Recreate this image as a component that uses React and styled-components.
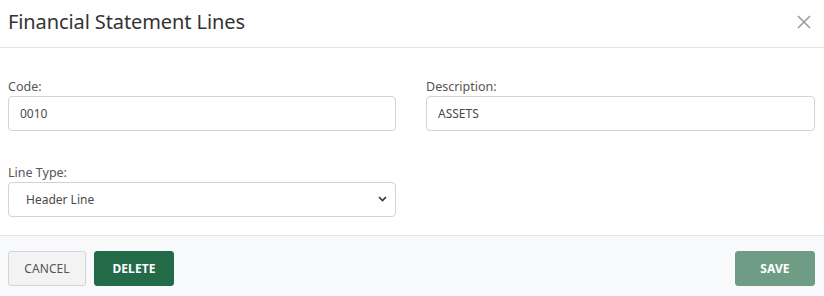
import React from "react";
import styled, { createGlobalStyle } from "styled-components";

const Global = createGlobalStyle`
  html, body { margin: 0; padding: 0; background: #fff; }
  body { font-family: "Segoe UI", "Noto Sans", "Open Sans", sans-serif; color: #333; }
  * { box-sizing: border-box; }
`;

const Modal = styled.div`
  width: 824px;
  height: 296px;
  display: flex;
  flex-direction: column;
  background: #fff;
  overflow: hidden;
`;

const Header = styled.div`
  height: 48px;
  display: flex;
  align-items: center;
  justify-content: space-between;
  padding: 0 12px 0 8px;
  border-bottom: 1px solid #e2e2e2;
`;

const Title = styled.h4`
  margin: 0;
  font-size: 20px;
  font-weight: 400;
  color: #333;
  letter-spacing: -0.1px;
  line-height: 1;
  padding-bottom: 4px;
`;

const CloseBtn = styled.button`
  border: 0;
  background: none;
  padding: 0;
  width: 16px;
  height: 16px;
  display: flex;
  align-items: center;
  justify-content: center;
  margin-bottom: 4px;
  cursor: pointer;
`;

const Body = styled.div`
  flex: 1;
  padding: 30px 9px 0 8px;
  display: grid;
  grid-template-columns: 388px 389px;
  column-gap: 30px;
  row-gap: 33px;
  align-content: start;
`;

const Field = styled.div`
  display: flex;
  flex-direction: column;
`;

const Label = styled.label`
  font-size: 12.5px;
  line-height: 18px;
  color: #555;
`;

const inputBase = `
  height: 35px;
  border: 1px solid #cfd4da;
  border-radius: 4px;
  background: #fff;
  font-family: inherit;
  font-size: 12px;
  color: #4a4a4a;
  outline: none;
`;

const Input = styled.input`
  ${inputBase}
  padding: 0 11px;
`;

const SelectWrap = styled.div`
  position: relative;
`;

const Select = styled.select`
  ${inputBase}
  width: 100%;
  padding: 0 24px 0 17px;
  appearance: none;
  -webkit-appearance: none;
`;

const Chevron = styled.svg`
  position: absolute;
  right: 9px;
  top: 14px;
  pointer-events: none;
`;

const Footer = styled.div`
  height: 61px;
  flex-shrink: 0;
  background: #f8f9fa;
  border-top: 1px solid #e3e5e8;
  display: flex;
  align-items: flex-start;
  padding: 15px 9px 0 8px;
  gap: 8px;
`;

const Button = styled.button`
  height: 35px;
  padding: 0;
  border-radius: 3px;
  font-family: inherit;
  font-size: 12px;
  font-weight: ${(p) => (p.$variant === "cancel" ? 400 : 700)};
  letter-spacing: 0.1px;
  border: 1px solid
    ${(p) =>
      p.$variant === "cancel" ? "#d2d4d7" : p.$variant === "save" ? "#6e9c84" : "#226a48"};
  background: ${(p) =>
    p.$variant === "cancel" ? "#f3f3f4" : p.$variant === "save" ? "#6e9c84" : "#236a48"};
  color: ${(p) => (p.$variant === "cancel" ? "#555" : "#fff")};
  margin-left: ${(p) => (p.$push ? "auto" : "0")};
  width: ${(p) => p.$w}px;
`;

export default function App() {
  return (
    <>
      <Global />
      <Modal>
        <Header>
          <Title>Financial Statement Lines</Title>
          <CloseBtn aria-label="Close">
            <svg width="14" height="14" viewBox="0 0 14 14">
              <path d="M1 1L13 13M13 1L1 13" stroke="#999" strokeWidth="1.5" />
            </svg>
          </CloseBtn>
        </Header>
        <Body>
          <Field>
            <Label>Code:</Label>
            <Input defaultValue="0010" />
          </Field>
          <Field>
            <Label>Description:</Label>
            <Input defaultValue="ASSETS" />
          </Field>
          <Field>
            <Label>Line Type:</Label>
            <SelectWrap>
              <Select defaultValue="header">
                <option value="header">Header Line</option>
                <option value="detail">Detail Line</option>
              </Select>
              <Chevron width="9" height="6" viewBox="0 0 9 6">
                <path d="M1 1L4.5 4.5L8 1" fill="none" stroke="#333" strokeWidth="1.6" />
              </Chevron>
            </SelectWrap>
          </Field>
        </Body>
        <Footer>
          <Button $variant="cancel" $w={78}>CANCEL</Button>
          <Button $variant="delete" $w={80}>DELETE</Button>
          <Button $variant="save" $w={80} $push>SAVE</Button>
        </Footer>
      </Modal>
    </>
  );
}
